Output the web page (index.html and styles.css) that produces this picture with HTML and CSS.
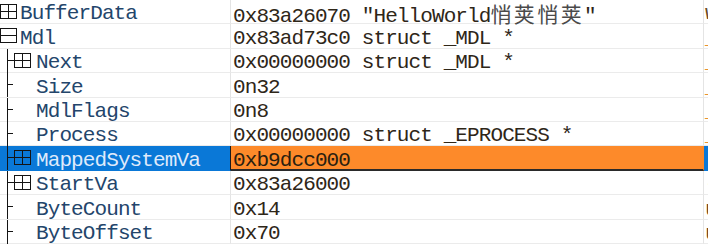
FILE: index.html
```html
<!DOCTYPE html>
<html>
<head>
<meta charset="utf-8">
<link rel="stylesheet" href="styles.css">
</head>
<body>
<div class="grid">
  <div class="row">
    <div class="cell name"><span class="box plus root"></span><span class="label">BufferData</span></div>
    <div class="cell value"><span class="txt">0x83a26070 "HelloWorld<span class="cjk">悄荚悄荚</span>"</span></div>
    <div class="cell type"><span class="txt">w</span></div>
  </div>
  <div class="row">
    <div class="cell name"><span class="box minus root"></span><span class="label">Mdl</span></div>
    <div class="cell value"><span class="txt">0x83ad73c0 struct _MDL *</span></div>
    <div class="cell type t-or"><span class="txt">_</span></div>
  </div>
  <div class="row">
    <div class="cell name"><span class="tree short"></span><span class="box plus"></span><span class="label">Next</span></div>
    <div class="cell value"><span class="txt">0x00000000 struct _MDL *</span></div>
    <div class="cell type t-or"><span class="txt">_</span></div>
  </div>
  <div class="row">
    <div class="cell name"><span class="tree"></span><span class="label">Size</span></div>
    <div class="cell value"><span class="txt">0n32</span></div>
    <div class="cell type t-or"><span class="txt">_</span></div>
  </div>
  <div class="row">
    <div class="cell name"><span class="tree"></span><span class="label">MdlFlags</span></div>
    <div class="cell value"><span class="txt">0n8</span></div>
    <div class="cell type t-or"><span class="txt">_</span></div>
  </div>
  <div class="row">
    <div class="cell name"><span class="tree"></span><span class="label">Process</span></div>
    <div class="cell value"><span class="txt">0x00000000 struct _EPROCESS *</span></div>
    <div class="cell type t-or"><span class="txt">_</span></div>
  </div>
  <div class="row sel">
    <div class="cell name"><span class="tree short"></span><span class="box plus"></span><span class="label">MappedSystemVa</span></div>
    <div class="cell value"><span class="txt">0xb9dcc000</span></div>
    <div class="cell type"></div>
  </div>
  <div class="row">
    <div class="cell name"><span class="tree short"></span><span class="box plus"></span><span class="label">StartVa</span></div>
    <div class="cell value"><span class="txt">0x83a26000</span></div>
    <div class="cell type"><span class="txt">-</span></div>
  </div>
  <div class="row">
    <div class="cell name"><span class="tree"></span><span class="label">ByteCount</span></div>
    <div class="cell value"><span class="txt">0x14</span></div>
    <div class="cell type"><span class="txt">u</span></div>
  </div>
  <div class="row">
    <div class="cell name"><span class="tree"></span><span class="label">ByteOffset</span></div>
    <div class="cell value"><span class="txt">0x70</span></div>
    <div class="cell type"><span class="txt">u</span></div>
  </div>
</div>
</body>
</html>
```

FILE: styles.css
```css
html, body {
  margin: 0;
  padding: 0;
  background: #ffffff;
}
body {
  width: 708px;
  height: 248px;
  overflow: hidden;
  font-family: "Liberation Mono", "Noto Sans CJK SC", monospace;
  font-size: 21px;
  letter-spacing: -0.9px;
}
.grid {
  display: flex;
  flex-direction: column;
}
.row {
  display: grid;
  grid-template-columns: 231px 473px 1fr;
  height: 24.4px;
}
.cell {
  box-sizing: border-box;
  height: 24.4px;
  border-bottom: 1px solid #ebebeb;
  line-height: 19px;
  white-space: pre;
}
.txt, .label {
  display: block;
  padding-top: 4.4px;
}
.name {
  display: flex;
  align-items: flex-start;
  border-right: 1px solid #e4e4e4;
  color: #23456b;
}
.value {
  border-right: 1px solid #e4e4e4;
  padding-left: 2px;
  color: #2e2618;
}
.type {
  padding-left: 1px;
  color: #6b4a1e;
  overflow: hidden;
}
.t-or {
  color: #e8922e;
}
.cjk {
  font-family: "Noto Sans CJK SC", sans-serif;
  letter-spacing: 2.4px;
  color: #4a4a4a;
}

/* tree guides */
.tree {
  flex: none;
  width: 36px;
  height: 24px;
  background:
    linear-gradient(#141414, #141414) 7px 0 / 1px 24px no-repeat,
    linear-gradient(#141414, #141414) 7px 11px / 6px 1px no-repeat;
}
.tree.short {
  width: 14px;
  background:
    linear-gradient(#141414, #141414) 7px 0 / 1px 24px no-repeat,
    linear-gradient(#141414, #141414) 7px 11px / 7px 1px no-repeat;
}
.box {
  flex: none;
  box-sizing: border-box;
  width: 17px;
  height: 15px;
  margin-top: 4px;
  margin-right: 5px;
  border: 1px solid #141414;
}
.box.root {
  margin-right: 3px;
}
.box.plus {
  background:
    linear-gradient(#141414, #141414) center / 100% 1px no-repeat,
    linear-gradient(#141414, #141414) center / 1px 100% no-repeat;
}
.box.minus {
  background:
    linear-gradient(#141414, #141414) center / 100% 1px no-repeat;
}

.sel .name {
  background: #0a78d7;
  color: #dfeafb;
  border-right-color: #1a1a1a;
  border-bottom-color: #0a78d7;
}
.sel .value {
  background: #fd8a2a;
  border-bottom: 2px solid #2a2a2a;
  border-right-color: #fd8a2a;
  color: #2a2010;
}
.sel .type {
  background: #0a78d7;
  border-bottom-color: #0a78d7;
}
```
